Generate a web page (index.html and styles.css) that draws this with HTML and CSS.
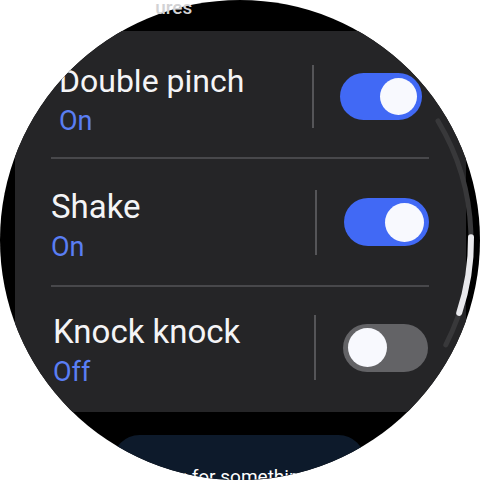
FILE: index.html
```html
<!DOCTYPE html>
<html lang="en">
<head>
<meta charset="utf-8">
<title>Gestures</title>
<link rel="stylesheet" href="styles.css">
</head>
<body>
<div class="page">
  <div class="watch">
    <div class="card">
      <div class="row row-first">
        <div class="info">
          <div class="title">Double pinch</div>
          <div class="sub">On</div>
        </div>
        <div class="vdiv vdiv-short"></div>
        <div class="toggle toggle-on toggle-small"><span class="knob"></span></div>
      </div>
      <div class="sep"></div>
      <div class="row row-mid">
        <div class="info">
          <div class="title">Shake</div>
          <div class="sub">On</div>
        </div>
        <div class="vdiv"></div>
        <div class="toggle toggle-on"><span class="knob"></span></div>
      </div>
      <div class="sep"></div>
      <div class="row row-last">
        <div class="info">
          <div class="title">Knock knock</div>
          <div class="sub">Off</div>
        </div>
        <div class="vdiv"></div>
        <div class="toggle toggle-off"><span class="knob"></span></div>
      </div>
    </div>
    <div class="more">
      <div class="more-label">Looking for something else?</div>
    </div>
  </div>
  <div class="heading"><span class="heading-hidden">Gest</span>ures</div>
  <svg class="scroll" width="480" height="480" viewBox="0 0 480 480">
    <path d="M438 121 A231 231 0 0 1 445.8 344.9" fill="none" stroke="#38383a" stroke-width="5" stroke-linecap="round"/>
    <path d="M471 237.2 A231 231 0 0 1 459.2 312.9" fill="none" stroke="#e9e9ec" stroke-width="6" stroke-linecap="round"/>
  </svg>
</div>
</body>
</html>
```
FILE: styles.css
```css
html, body {
  margin: 0;
  padding: 0;
  background: #ffffff;
}

body {
  font-family: Roboto, "Noto Sans", Arial, sans-serif;
}

.page {
  position: relative;
  width: 480px;
  height: 480px;
  overflow: hidden;
}

.watch {
  width: 480px;
  height: 480px;
  background: #000000;
  clip-path: circle(240px at 240px 240px);
  padding-top: 31px;
  box-sizing: border-box;
  display: flex;
  flex-direction: column;
  align-items: stretch;
}

.card {
  margin: 0 14px 0 15px;
  height: 381px;
  background: #252527;
  display: flex;
  flex-direction: column;
}

.row {
  display: flex;
  align-items: center;
  box-sizing: border-box;
}

.row-first {
  height: 126px;
  padding: 4px 44px 0 44px;
}

.row-mid {
  height: 126px;
  padding: 0 37px 0 36px;
}

.row-last {
  height: 125px;
  padding: 0 38px 4px 38px;
}

.info {
  flex: 1;
  min-width: 0;
  padding-top: 5px;
}

.title {
  font-size: 33px;
  line-height: 38px;
  color: #f4f4f6;
  white-space: nowrap;
}

.row-first .title {
  font-size: 32px;
}

.sub {
  margin-top: 6px;
  font-size: 27px;
  line-height: 30px;
  color: #5a7ef3;
}

.vdiv {
  width: 2px;
  height: 65px;
  background: #555558;
}

.vdiv-short {
  height: 63px;
}

.toggle {
  margin-left: 27px;
  width: 85px;
  height: 48px;
  border-radius: 24px;
  box-sizing: border-box;
  padding: 0 5px;
  display: flex;
  align-items: center;
}

.toggle-small {
  margin-left: 26px;
  width: 82px;
  height: 47px;
}

.toggle-on {
  background: #4169f5;
  justify-content: flex-end;
}

.toggle-off {
  background: #636366;
  justify-content: flex-start;
}

.knob {
  width: 39px;
  height: 39px;
  border-radius: 50%;
  background: #f8f9fe;
}

.toggle-small .knob {
  width: 37px;
  height: 37px;
}

.sep {
  height: 2px;
  margin: 0 37px 0 36px;
  background: #48484b;
}

.more {
  margin: 23px auto 0 113px;
  width: 252px;
  height: 90px;
  border-radius: 30px;
  background: #0d1a2b;
  box-sizing: border-box;
  padding-top: 31px;
  display: flex;
  justify-content: center;
}

.more-label {
  font-size: 19px;
  line-height: 22px;
  color: #ffffff;
  white-space: nowrap;
}

.heading {
  position: absolute;
  top: -3px;
  left: 116px;
  font-size: 19px;
  line-height: 22px;
  font-weight: 500;
  color: #d2d2d4;
  white-space: nowrap;
}

.heading-hidden {
  color: #ffffff;
}

.scroll {
  position: absolute;
  top: 0;
  left: 0;
  pointer-events: none;
}
```
